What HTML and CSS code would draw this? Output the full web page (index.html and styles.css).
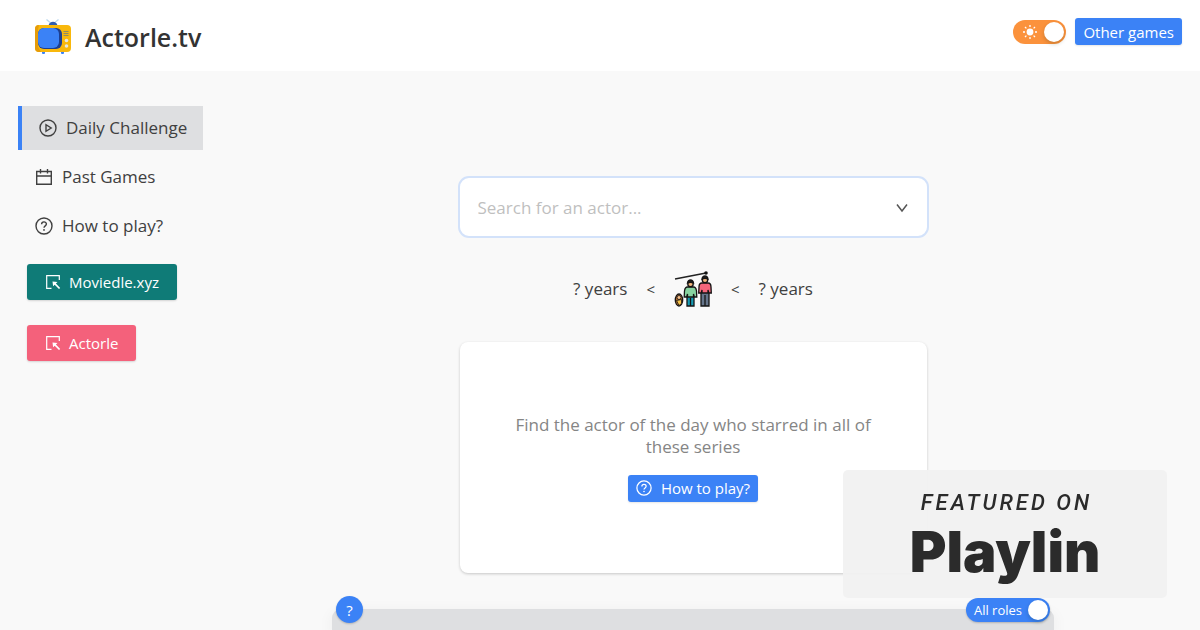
FILE: index.html
```html
<!DOCTYPE html>
<html lang="en">

<head>
    <meta charset="utf-8">
    <meta name="viewport" content="width=device-width, initial-scale=1">
    <title>Actorle.tv</title>
    <link rel="stylesheet" href="styles.css">
</head>

<body>
    <svg class="sprite" aria-hidden="true">
        <symbol id="question" viewBox="0 0 18 18">
            <g fill="none" stroke="currentColor" stroke-width="1.4">
                <circle cx="9" cy="9" r="8" />
                <path d="M6.6 7.2C6.6 4.1 11.4 4.1 11.4 7.1C11.4 9 9 8.8 9 10.8" />
            </g>
            <circle cx="9" cy="12.9" r=".9" fill="currentColor" />
        </symbol>
        <symbol id="select" viewBox="0 0 16 16">
            <path d="M14.300 6V1.700H1.700v12.600H6.500" fill="none" stroke="currentColor" stroke-width="1.2" />
            <path d="M7.500 7.500l5 .6-1.600 1.500 4.300 4.300-1.200 1.200-4.300-4.300-1.600 1.500z" fill="currentColor" />
        </symbol>
    </svg>

    <header class="header">
        <a class="brand" href="#">
            <svg class="logo" viewBox="0 0 38 38">
                <path d="M12.5 1.5l6 5 6-5" fill="none" stroke="#b9d7ee" stroke-width="1.3" />
                <path d="M14.5 7.5c1-5 8-5 9 0z" fill="#315eaf" />
                <rect x="8" y="33" width="3" height="3" rx="1" fill="#3b82f6" />
                <rect x="27" y="33" width="3" height="3" rx="1" fill="#3b82f6" />
                <rect x="1" y="7" width="36" height="27" rx="4" fill="#f9b80c" />
                <path d="M5 7a4 4 0 0 0-4 4v19a4 4 0 0 0 4 4h2l-3-5V12z" fill="#e69c09" />
                <rect x="4" y="10" width="24" height="21" rx="6" fill="#1e3f8f" />
                <rect x="4" y="10" width="21" height="20" rx="6" fill="#3b82f6" />
                <path d="M29.5 13.5h5M29.5 15.5h5M29.5 17.5h5" stroke="#8c8a68" stroke-width="1.2" />
                <circle cx="32.5" cy="22.5" r="1.8" fill="#e4e7e8" />
                <circle cx="32.5" cy="28" r="1.8" fill="#e4e7e8" />
            </svg>
            <h1>Actorle.tv</h1>
        </a>
        <div class="header-actions">
            <button class="switch switch-theme" type="button" role="switch" aria-checked="true" aria-label="Light theme">
                <svg class="sun" viewBox="0 0 16 16">
                    <circle cx="8" cy="8" r="3.4" fill="#fff" />
                    <path d="M8 1v2M8 13v2M1 8h2M13 8h2M3 3l1.4 1.4M11.6 11.6L13 13M13 3l-1.4 1.4M4.4 11.600L3 13" stroke="#fff" stroke-width="1.3" />
                </svg>
                <span class="knob"></span>
            </button>
            <button class="btn btn-blue" type="button">Other games</button>
        </div>
    </header>

    <div class="layout">
        <nav class="sidebar">
            <a class="nav-item active" href="#">
                <svg class="icon" viewBox="0 0 18 18">
                    <g fill="none" stroke="currentColor" stroke-width="1.4">
                        <circle cx="9" cy="9" r="8" />
                        <path d="M7 5.7v6.6L12.2 9z" />
                    </g>
                </svg>
                Daily Challenge
            </a>
            <a class="nav-item" href="#">
                <svg class="icon" viewBox="0 0 18 18">
                    <path d="M1.7 3.5h14.6v12.8H1.7zM1.7 8h14.6M5.5 1v4.500M12.5 1v4.500" fill="none" stroke="currentColor" stroke-width="1.4" />
                </svg>
                Past Games
            </a>
            <a class="nav-item" href="#">
                <svg class="icon"><use href="#question" /></svg>
                How to play?
            </a>
            <a class="nav-btn teal" href="#">
                <svg class="icon-sm"><use href="#select" /></svg>
                Moviedle.xyz
            </a>
            <a class="nav-btn pink" href="#">
                <svg class="icon-sm"><use href="#select" /></svg>
                Actorle
            </a>
        </nav>

        <main class="main">
            <div class="search">
                <input type="text" aria-label="Search for an actor" placeholder="Search for an actor...">
                <svg class="chevron" viewBox="0 0 12 10">
                    <path d="M1 1.5l5 6.5 5-6.5" fill="none" stroke="currentColor" stroke-width="1.5" />
                </svg>
            </div>

            <div class="ages">
                <span>? years</span>
                <span class="less">&lt;</span>
                <svg class="people" viewBox="0 0 38 38">
                    <path d="M1 9L32 3" stroke="#222" stroke-width="1.5" />
                    <circle cx="32" cy="3" r="1.8" fill="#111" />
                    <g stroke="#151515" stroke-width="1.3">
                        <!-- baby -->
                        <ellipse cx="5" cy="30" rx="3.7" ry="6" fill="#b66b2b" />
                        <circle cx="5" cy="27.500" r="2" fill="#f7c08a" stroke-width=".8" />
                        <path d="M2.5 30.500l5-1v4l-2.500 2z" fill="#f6c34b" stroke-width=".8" />
                        <!-- child -->
                        <path d="M13 26h7v10h-7z" fill="#159bb3" />
                        <path d="M16.500 28v8" />
                        <path d="M13.5 17h6q2.500 0 3 4l.3 6h-2.500l-.8-3v3h-6v-3l-.8 3h-2.500l.3-6q.5-4 3-4z" fill="#87d3a0" />
                        <circle cx="16.500" cy="14" r="2.700" fill="#f4b77f" />
                        <path d="M13.5 13q.5-3 3-3t3 3q-3-1.500-6 0z" fill="#222" />
                        <!-- adult -->
                        <path d="M27 22h8v14h-8z" fill="#65758b" />
                        <path d="M31 25v11" />
                        <path d="M28 13h6q3 0 3 4l.3 6h-2.500l-.8-3v3h-6v-3l-.8 3h-2.500l.3-6q0-4 3-4z" fill="#f4667b" />
                        <circle cx="31" cy="10" r="2.700" fill="#f4b77f" />
                        <path d="M28 9q.5-3 3-3t3 3q-3-1.500-6 0z" fill="#222" />
                    </g>
                </svg>
                <span class="less">&lt;</span>
                <span>? years</span>
            </div>

            <section class="card">
                <p>Find the actor of the day who starred in all of these series</p>
                <button class="btn btn-blue" type="button">
                    <svg class="icon-sm"><use href="#question" /></svg>
                    How to play?
                </button>
            </section>

            <section class="panel">
                <button class="help" type="button" aria-label="Help">?</button>
                <button class="switch switch-roles" type="button" role="switch" aria-checked="true">
                    All roles
                    <span class="knob"></span>
                </button>
            </section>
        </main>
    </div>

    <a class="featured" href="#">
        <span class="featured-on">FEATURED ON</span>
        <span class="playlin">Playlin</span>
    </a>
</body>

</html>
```
FILE: styles.css
```css
* {
    box-sizing: border-box;
}

body {
    margin: 0;
    min-height: 100vh;
    display: flex;
    flex-direction: column;
    background-color: #f9f9f9;
    color: #404040;
    font-family: "Open Sans", "Noto Sans", sans-serif;
    font-size: 17px;
    line-height: 22px;
}

a {
    color: inherit;
    text-decoration: none;
}

button {
    border: 0;
    padding: 0;
    color: #ffffff;
    font-family: inherit;
    cursor: pointer;
}

svg {
    display: block;
    flex: none;
}

.sprite {
    position: absolute;
    width: 0;
    height: 0;
}

.icon {
    width: 18px;
    height: 18px;
}

.icon-sm {
    width: 16px;
    height: 16px;
}

/* header */
.header {
    display: flex;
    justify-content: space-between;
    align-items: flex-start;
    height: 71px;
    padding: 18px 18px 0 34px;
    background-color: #ffffff;
}

.brand {
    display: flex;
    align-items: center;
    gap: 13px;
}

.brand h1 {
    margin: 0;
    color: #333333;
    font-size: 25px;
    font-weight: 600;
    line-height: 38px;
}

.logo {
    width: 38px;
    height: 38px;
}

.header-actions {
    display: flex;
    align-items: center;
    gap: 9px;
}

.btn {
    display: flex;
    align-items: center;
    gap: 9px;
    height: 27px;
    padding: 0 8px;
    border-radius: 3px;
    font-size: 15px;
    line-height: 20px;
}

.btn-blue {
    background-color: #3b82f6;
    box-shadow: 0 1px 2px rgba(0, 0, 0, 0.1);
}

.switch {
    display: flex;
    align-items: center;
    justify-content: space-between;
    height: 24px;
    border-radius: 12px;
}

.switch-theme {
    width: 53px;
    padding: 0 2px 0 9px;
    background-color: #fb923c;
}

.sun {
    width: 16px;
    height: 16px;
}

.knob {
    width: 20px;
    height: 20px;
    border-radius: 50%;
    background-color: #ffffff;
    box-shadow: 0 2px 4px rgba(0, 35, 11, 0.2);
}

/* sidebar */
.layout {
    display: flex;
    flex: 1;
}

.sidebar {
    display: flex;
    flex: none;
    flex-direction: column;
    align-items: flex-start;
    width: 203px;
    padding: 35px 0 0 18px;
}

.nav-item {
    display: flex;
    align-items: center;
    gap: 9px;
    height: 49px;
    padding-left: 17px;
}

.nav-item.active {
    height: 44px;
    width: 100%;
    margin-bottom: 2px;
    border-left: 4px solid #3b82f6;
    background-color: #dedfe1;
}

.nav-btn {
    display: flex;
    align-items: center;
    gap: 8px;
    height: 36px;
    margin: 14px 0 11px 9px;
    padding: 0 18px;
    border-radius: 3px;
    color: #ffffff;
    font-size: 15px;
    box-shadow: 0 1px 2px rgba(0, 0, 0, 0.15);
}

.teal {
    background-color: #0f7b77;
}

.pink {
    background-color: #f4617b;
}

/* game */
.main {
    display: flex;
    flex: 1;
    flex-direction: column;
    align-items: center;
    padding: 105px 17px 0 0;
}

.search {
    display: flex;
    align-items: center;
    width: 100%;
    max-width: 471px;
    height: 62px;
    padding: 2px 19px 0 18px;
    border: 2px solid #d3e2fa;
    border-radius: 11px;
    background-color: #ffffff;
}

.search input {
    flex: 1;
    min-width: 0;
    padding: 0;
    border: 0;
    outline: 0;
    background: none;
    color: #404040;
    font: inherit;
}

.search input::placeholder {
    color: #bfbfbf;
}

.chevron {
    width: 12px;
    height: 10px;
    color: #555555;
}

.ages {
    display: flex;
    align-items: center;
    gap: 19px;
    margin: 32px 0 34px;
}

.less {
    font-size: 15px;
}

.people {
    width: 38px;
    height: 38px;
}

.card {
    display: flex;
    flex-direction: column;
    align-items: center;
    justify-content: center;
    width: 100%;
    max-width: 467px;
    min-height: 231px;
    padding: 0 45px;
    border-radius: 8px;
    background-color: #ffffff;
    box-shadow: 0 1px 3px rgba(0, 0, 0, 0.2);
}

.card p {
    margin: 0 0 17px;
    color: #858585;
    text-align: center;
}

.panel {
    display: flex;
    flex: 1;
    align-items: flex-start;
    justify-content: space-between;
    width: 100%;
    max-width: 722px;
    margin-top: 36px;
    padding: 0 4px;
    border-radius: 9px 9px 0 0;
    background-color: #dedfe1;
    box-shadow: 0 4px 16px rgba(0, 0, 0, 0.06);
}

.help,
.switch-roles {
    margin-top: -13px;
    background-color: #3b82f6;
    box-shadow: 0 1px 2px rgba(0, 0, 0, 0.2);
}

.help {
    width: 27px;
    height: 27px;
    border-radius: 50%;
    font-size: 15px;
}

.switch-roles {
    gap: 6px;
    margin-top: -11px;
    padding: 0 2px 0 8px;
    font-size: 13px;
}

/* badge that floats over the page */
.featured {
    position: fixed;
    right: 33px;
    bottom: 32px;
    display: flex;
    flex-direction: column;
    align-items: center;
    width: 324px;
    height: 128px;
    padding-top: 21px;
    border-radius: 5px;
    background-color: rgba(241, 241, 241, 0.95);
    color: #2b2b2b;
}

.featured-on {
    padding-left: 3px;
    font-family: Roboto, sans-serif;
    font-size: 22px;
    font-style: italic;
    font-weight: 500;
    letter-spacing: 3px;
    line-height: 24px;
}

.playlin {
    font-family: Inter, sans-serif;
    font-size: 56px;
    font-weight: 900;
    line-height: 74px;
}
```
